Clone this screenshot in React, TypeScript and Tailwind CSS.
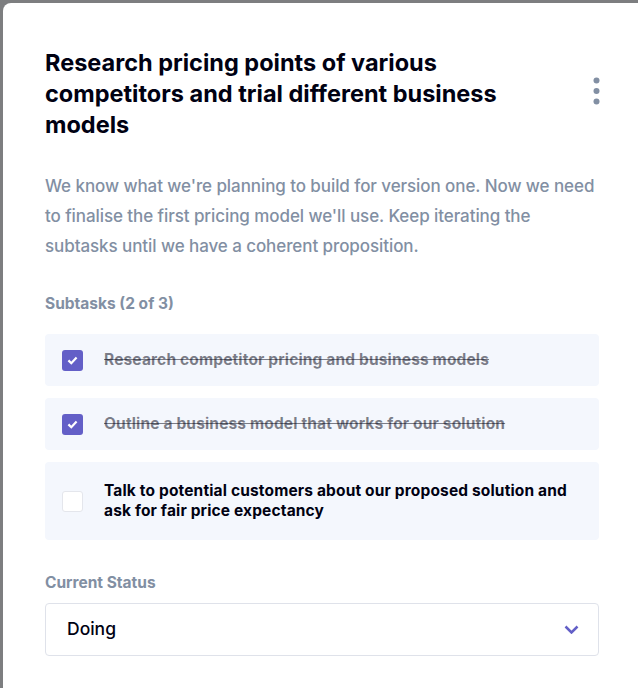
import React from "react";

const subtasks = [
  { title: "Research competitor pricing and business models", done: true },
  { title: "Outline a business model that works for our solution", done: true },
  {
    title:
      "Talk to potential customers about our proposed solution and ask for fair price expectancy",
    done: false,
  },
];

function Check() {
  return (
    <svg width="11" height="9" viewBox="0 0 10 8" fill="none">
      <path d="M1.3 3.9l2.6 2.6L8.7 1.3" stroke="#fff" strokeWidth="2" />
    </svg>
  );
}

export default function App() {
  return (
    <div
      className="w-[638px] h-[688px] overflow-hidden bg-[#7d7e80] pt-[3px] pl-[3px]"
      style={{ fontFamily: "Inter, 'Noto Sans', sans-serif" }}
    >
      <div className="w-[638px] h-[700px] bg-white rounded-tl-[8px] px-[42px] pt-[44px]">
        <div className="flex items-center justify-between">
          <h1 className="w-[505px] text-[23.5px] leading-[31px] font-bold text-[#000112]">
            Research pricing points of various competitors and trial different business models
          </h1>
          <svg width="7" height="28" viewBox="0 0 7 28" className="mr-[-1px] mb-[6px]">
            <circle cx="3.5" cy="3.5" r="3" fill="#828FA3" />
            <circle cx="3.5" cy="14" r="3" fill="#828FA3" />
            <circle cx="3.5" cy="24.5" r="3" fill="#828FA3" />
          </svg>
        </div>
        <p className="mt-[31px] text-[17px] leading-[30px] font-medium tracking-[-0.08px] text-[#828FA3]">
          We know what we're planning to build for version one. Now we need to finalise the
          first pricing model we'll use. Keep iterating the subtasks until we have a coherent
          proposition.
        </p>
        <div className="mt-[33px] text-[15.5px] leading-[20px] font-bold text-[#828FA3]">
          Subtasks (2 of 3)
        </div>
        <div className="mt-[20px] flex flex-col gap-[12px]">
          {subtasks.map((s, i) => (
            <div
              key={i}
              className={
                "flex items-center gap-[21px] rounded-[4px] bg-[#F4F7FD] pl-[17px] pr-[16px] " +
                (i === 2 ? "py-[19px]" : "py-[15.5px]")
              }
            >
              {s.done ? (
                <div className="flex h-[21px] w-[21px] shrink-0 items-center justify-center rounded-[3px] bg-[#635FC7]">
                  <Check />
                </div>
              ) : (
                <div className="h-[21px] w-[21px] shrink-0 rounded-[3px] border border-[#E4E6EC] bg-white" />
              )}
              <span
                className={
                  "text-[15.5px] leading-[20px] font-bold tracking-[0.15px] " +
                  (s.done ? "text-[#000112]/50 line-through" : "text-[#000112]")
                }
              >
                {s.title}
              </span>
            </div>
          ))}
        </div>
        <div className="mt-[33px] text-[15.5px] leading-[20px] font-bold text-[#828FA3]">
          Current Status
        </div>
        <div className="mt-[10px] flex h-[53px] items-center justify-between rounded-[4px] border border-[#DFE2EA] pl-[21px] pr-[19px]">
          <span className="text-[17.5px] font-medium text-[#000112]">Doing</span>
          <svg width="15" height="9" viewBox="0 0 15 9" fill="none">
            <path d="M1.5 1.5l6 6 6-6" stroke="#635FC7" strokeWidth="2.5" />
          </svg>
        </div>
      </div>
    </div>
  );
}
